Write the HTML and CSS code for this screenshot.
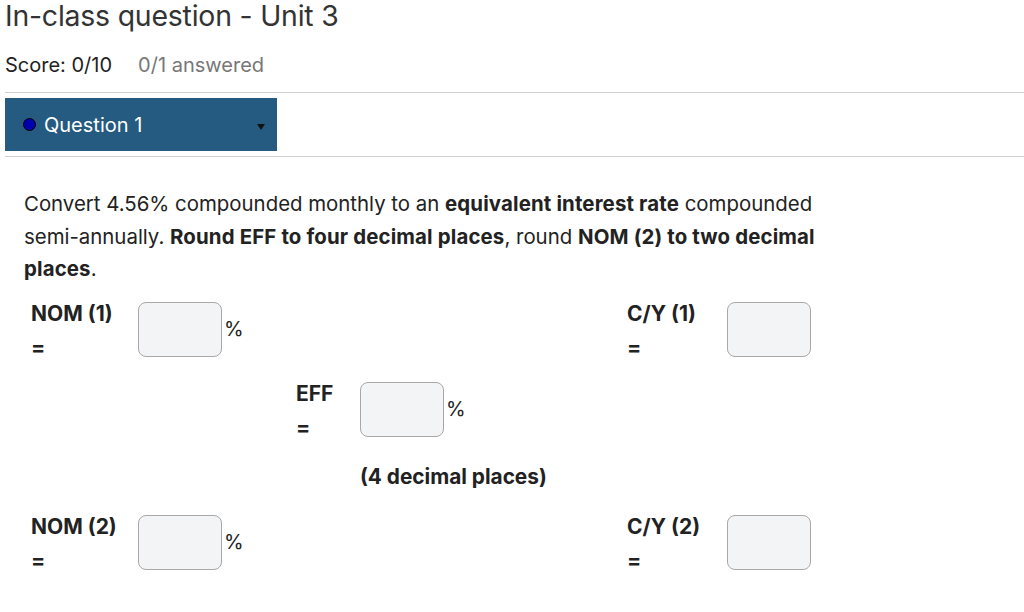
FILE: index.html
```html
<!DOCTYPE html>
<html>
<head>
<meta charset="utf-8">
<link rel="stylesheet" href="styles.css">
</head>
<body>
<div class="page">
  <h1 class="title">In-class question - Unit 3</h1>
  <div class="score-row">
    <span class="score">Score: 0/10</span>
    <span class="answered">0/1 answered</span>
  </div>
  <div class="divider"></div>
  <div class="qbar">
    <span class="dot"></span>
    <span class="qname">Question 1</span>
    <span class="caret"></span>
  </div>
  <div class="divider divider-2"></div>

  <div class="question">
    <p class="prompt"><span>Convert 4.56% compounded monthly to an</span> <b>equivalent interest rate</b> <span>compounded</span> <span>semi-annually.</span> <b>Round EFF to four decimal places</b><span>, round</span> <b>NOM (2) to two decimal</b> <b>places</b><span>.</span></p>

    <div class="grid">
      <div class="lbl c1 r1"><span class="ln">NOM (1)</span><span class="ln">=</span></div>
      <div class="field c2 r1"><span class="box"></span><span class="pct">%</span></div>
      <div class="lbl c5 r1"><span class="ln">C/Y (1)</span><span class="ln">=</span></div>
      <div class="field c6 r1"><span class="box"></span></div>

      <div class="lbl c3 r2"><span class="ln">EFF</span><span class="ln">=</span></div>
      <div class="field c4 r2"><span class="box"></span><span class="pct">%</span></div>

      <div class="note c4 r3">(4 decimal places)</div>

      <div class="lbl c1 r4"><span class="ln">NOM (2)</span><span class="ln">=</span></div>
      <div class="field c2 r4"><span class="box"></span><span class="pct">%</span></div>
      <div class="lbl c5 r4"><span class="ln">C/Y (2)</span><span class="ln">=</span></div>
      <div class="field c6 r4"><span class="box"></span></div>
    </div>
  </div>
</div>
</body>
</html>
```

FILE: styles.css
```css
* { box-sizing: border-box; }
html, body { margin: 0; padding: 0; background: #fff; }
body {
  font-family: Inter, "Noto Sans", "Liberation Sans", sans-serif;
  color: #222;
  width: 1024px;
  height: 612px;
  overflow: hidden;
}
.page { padding-left: 5px; }
.title {
  margin: 0;
  font-size: 28.4px;
  font-weight: 400;
  color: #333;
  line-height: 32px;
  letter-spacing: -0.2px;
}
.score-row {
  margin-top: 18px;
  height: 30px;
  display: flex;
  gap: 26px;
  font-size: 20px;
  line-height: 30px;
}
.score { color: #222; }
.answered { color: #777; }
.divider {
  margin-top: 12px;
  height: 1px;
  background: #cfcfcf;
}
.qbar {
  margin-top: 5px;
  width: 272px;
  height: 53px;
  background: #255b80;
  display: flex;
  align-items: center;
  padding-left: 18px;
  padding-right: 10px;
  color: #fff;
  font-size: 20px;
}
.dot {
  width: 13px;
  height: 13px;
  border-radius: 50%;
  background: #0000b0;
  border: 1.5px solid #000;
  margin-right: 8px;
}
.qname { flex: 1; }
.caret {
  width: 0;
  height: 0;
  border-left: 4.5px solid transparent;
  border-right: 4.5px solid transparent;
  border-top: 6px solid #111;
  margin-top: 4px;
  margin-right: 2px;
}
.divider-2 { margin-top: 5px; }
.question { padding-left: 19px; }
.prompt {
  margin: 31px 0 0;
  width: 815px;
  font-size: 20.4px;
  line-height: 32.5px;
  color: #222;
}
.prompt b { font-weight: 700; letter-spacing: 0.15px; }
.grid {
  margin-top: 11px;
  display: grid;
  grid-template-columns: 107px 158px 64px 267px 100px 120px;
  grid-template-rows: 80px 83px 50px 70px;
  margin-left: 7px;
}
.lbl {
  font-weight: 700;
  font-size: 21px;
  line-height: 34px;
  color: #222;
  display: flex;
  flex-direction: column;
}
.ln { display: block; white-space: nowrap; }
.field {
  display: flex;
  align-items: center;
  margin-top: 5px;
  height: 55px;
}
.box {
  display: block;
  width: 84px;
  height: 55px;
  border: 1px solid #a8a8a8;
  border-radius: 8px;
  background: #f3f4f6;
}
.pct {
  font-size: 20px;
  margin-left: 2px;
  color: #222;
}
.note {
  font-weight: 700;
  font-size: 20.8px;
  line-height: 34px;
  white-space: nowrap;
}
.c1 { grid-column: 1; }
.c2 { grid-column: 2; }
.c3 { grid-column: 3; }
.c4 { grid-column: 4; }
.c5 { grid-column: 5; }
.c6 { grid-column: 6; }
.r1 { grid-row: 1; }
.r2 { grid-row: 2; }
.r3 { grid-row: 3; }
.r4 { grid-row: 4; }
```
